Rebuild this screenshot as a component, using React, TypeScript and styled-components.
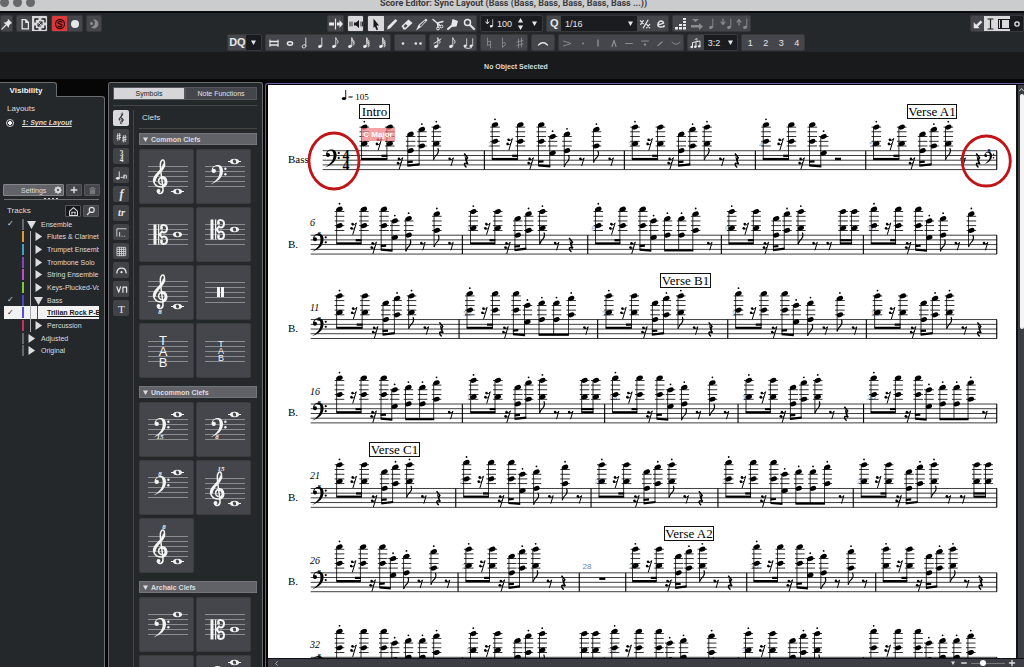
import React from "react";
import styled, { createGlobalStyle, css } from "styled-components";

const Global = createGlobalStyle`
  * { box-sizing: border-box; }
  html, body, #root { height: 100%; }
  body { margin: 0; overflow: hidden; background: #060607; font-family: "Liberation Sans", Arial, sans-serif; font-size: 8px; color: #dcdddf; }
  button, input, select { font: inherit; color: inherit; margin: 0; padding: 0; border: 0; background: none; border-radius: 0; }
  button { display: inline-flex; align-items: center; justify-content: center; flex: none; }
  h1, h2, h3, p, ul { margin: 0; padding: 0; font-size: inherit; font-weight: inherit; list-style: none; }
  svg { display: block; flex: none; }
`;

/* ---------- window chrome ---------- */

const Window = styled.div`
  display: flex;
  flex-direction: column;
  height: 100vh;
  overflow: hidden;
`;
const TitleBar = styled.header`
  display: flex;
  align-items: flex-start;
  height: 13px;
  flex: none;
  background: #cbccce;
  border-bottom: 2px solid #0b0b0d;
  overflow: hidden;
`;
const Lights = styled.div`
  display: flex;
  gap: 4px;
  flex: 1;
  i { width: 9px; height: 9px; margin-top: -2px; border-radius: 50%; background: #676869; }
`;
const Title = styled.h1`
  flex: none;
  margin-top: -3px;
  padding-left: 3px;
  color: #3a3b3d;
  font: bold 9px/12px Roboto, "Liberation Sans", sans-serif;
  white-space: nowrap;
`;
const TitleEnd = styled.div`flex: 1;`;
const Toolbars = styled.div`
  flex: none;
  height: 39px;
  padding-top: 2px;
  display: flex;
  flex-direction: column;
  gap: 2px;
  background: #25282b;
  overflow: hidden;
`;
const ToolRow = styled.div`
  display: flex;
  gap: 3px;
  height: 17px;
  white-space: nowrap;
`;
const Spacer = styled.div<{ $grow: number }>`flex: ${(p) => p.$grow} 1 0;`;
const Group = styled.div<{ $w?: number; $dim?: boolean }>`
  display: flex;
  flex: none;
  width: ${(p) => (p.$w ? `${p.$w}px` : "auto")};
  background: #45464b;
  border: 1px solid #37383c;
  border-radius: 2px;
  color: ${(p) => (p.$dim ? "#8a8b8f" : "#e6e7e9")};
  overflow: hidden;
  > button { flex: 1 1 16px; min-width: 0; }
`;
const Tool = styled.button<{ $tone?: "light" | "red" | "dark" }>`
  font-size: 9px;
  ${(p) => p.$tone === "light" && css`background: #d9d9dc; color: #18191b;`}
  ${(p) => p.$tone === "red" && css`background: #dc3a3a; color: #3a0a0c;`}
  ${(p) => p.$tone === "dark" && css`background: #1a1b1e;`}
`;
const Field = styled.div<{ $w: number }>`
  display: flex;
  align-items: center;
  justify-content: space-between;
  width: ${(p) => p.$w}px;
  padding: 0 4px;
  background: #1b1c1f;
  font-size: 9px;
`;
const Stepper = styled.span`
  display: flex;
  flex-direction: column;
  gap: 2px;
`;
const NumberInput = styled.input`width: 20px; font-size: 9px;`;
const Select = styled.select`
  flex: 1;
  min-width: 0;
  appearance: none;
  font-size: 9px;
`;
const Caption = styled.span<{ $w: number }>`
  width: ${(p) => p.$w}px;
  text-align: center;
  font-size: 11px;
  line-height: 15px;
  font-weight: bold;
`;
const InfoLine = styled.div`
  flex: none;
  height: 30px;
  display: flex;
  align-items: center;
  justify-content: center;
  padding: 1px 0 0 8px;
  background: #191a1c;
  border-bottom: 3px solid #060607;
  font-size: 7px;
  font-weight: bold;
`;
const Body = styled.div`
  flex: 1;
  min-height: 0;
  display: flex;
`;

/* ---------- visibility panel ---------- */

const Visibility = styled.aside`
  width: 105px;
  flex: none;
  display: flex;
  flex-direction: column;
`;
const TabStrip = styled.div`
  display: flex;
  height: 14px;
  flex: none;
`;
const PanelTab = styled.button`
  width: 57px;
  height: 15px;
  background: #25282b;
  border: solid #6a6c70;
  border-width: 1px 1px 0 0;
  border-radius: 0 3px 0 0;
  font-weight: bold;
  font-size: 8px;
  padding-right: 4px;
  color: #f2f2f3;
  z-index: 1;
`;
const VisBody = styled.div`
  flex: 1;
  min-height: 0;
  background: #25282b;
  border: solid #6a6c70;
  border-width: 1px 1px 0 0;
  border-radius: 0 3px 0 0;
  padding: 6px 5px 0 3px;
  display: flex;
  flex-direction: column;
`;
const SectionTitle = styled.h2`
  font-size: 8px;
  line-height: 12px;
  padding-left: 4px;
  flex: 1;
`;
const Layouts = styled.section`height: 81px; flex: none;`;
const LayoutChoice = styled.label`
  display: flex;
  align-items: center;
  gap: 8px;
  margin-top: 3px;
  padding-left: 3px;
  height: 10px;
  font: italic bold 7px/10px "Liberation Sans", sans-serif;
  text-decoration: underline;
  input {
    appearance: none;
    width: 8px;
    height: 8px;
    border: 1px solid #d0d1d3;
    border-radius: 50%;
    background: radial-gradient(circle, #fff 0 2px, transparent 2px);
  }
`;
const ButtonRow = styled.div`display: flex; gap: 2px; flex: none; align-items: center;`;
const FlatButton = styled.button<{ $w: number; $tone?: string }>`
  width: ${(p) => p.$w}px;
  height: 12px;
  background: ${(p) => p.$tone ?? "#45464b"};
  border: 1px solid #55565b;
  border-radius: 1px;
  font-size: 7px;
  gap: 8px;
`;
const SettingsButton = styled(FlatButton)`
  justify-content: space-between;
  padding: 0 2px 0 17px;
  background: #626368;
  border-color: #85868a;
`;
const Handle = styled.div`
  margin: 2px 0 5px 1px;
  height: 2px;
  flex: none;
  border-bottom: 1px solid #6b6d70;
  background: repeating-linear-gradient(90deg, #d0d1d3 0 2px, transparent 2px 4px) 40px 0 / 14px 2px no-repeat;
`;
const Tree = styled.ul`
  height: 139px;
  margin: 1px 0 0 1px;
  display: grid;
  grid-template-rows: repeat(11, 1fr);
  flex: none;
`;
const TreeRow = styled.li<{ $selected?: boolean }>`
  display: flex;
  align-items: center;
  overflow: hidden;
  font-size: 7px;
  white-space: nowrap;
  ${(p) => p.$selected && css`background: #f2f2f3; color: #17181a;`}
`;
const TrackName = styled.span<{ $selected?: boolean }>`
  ${(p) => p.$selected && css`font-weight: bold; text-decoration: underline;`}
`;
const Check = styled.span`width: 18px; flex: none; padding-left: 3px; font: bold 8px/8px "DejaVu Sans", sans-serif;`;
const Swatch = styled.span<{ $c: string }>`width: 2px; height: 11px; flex: none; background: ${(p) => p.$c};`;
const Guide = styled.span<{ $line: boolean }>`
  width: 7px;
  height: 100%;
  flex: none;
  border-right: 1px solid ${(p) => (p.$line ? "#a9abae" : "transparent")};
`;
const Toggle = styled.span<{ $level: number; $leaf?: boolean }>`
  width: 9px;
  height: 100%;
  flex: none;
  display: flex;
  align-items: center;
  justify-content: center;
  margin-left: ${(p) => (p.$level ? 3 : -4)}px;
  margin-right: ${(p) => (p.$level ? 4 : 5)}px;
  ${(p) => p.$leaf && css`background: linear-gradient(#4a4b4e, #4a4b4e) 3px 0 / 1px 100% no-repeat;`}
`;

/* ---------- symbols panel ---------- */

const Symbols = styled.aside`
  width: 155px;
  flex: none;
  margin: 0 2px 0 3px;
  padding: 4px 5px 0 4px;
  background: #25282b;
  border: 1px solid #6a6c70;
  border-bottom: 0;
  border-radius: 3px 3px 0 0;
  display: flex;
  flex-direction: column;
  overflow: hidden;
`;
const Tabs = styled.div`
  display: flex;
  flex: none;
  padding-bottom: 5px;
  border-bottom: 1px solid #44464a;
`;
const SymbolTab = styled.button<{ $on?: boolean }>`
  flex: 1;
  height: 13px;
  font-size: 7px;
  border: 1px solid #55565b;
  background: ${(p) => (p.$on ? "#d6d6d9" : "#45464b")};
  color: ${(p) => (p.$on ? "#1b1c1e" : "#e0e1e3")};
`;
const SymbolBody = styled.div`display: flex; flex: 1; min-height: 0; padding-top: 4px;`;
const Rail = styled.nav`
  display: flex;
  flex-direction: column;
  gap: 3px;
  width: 21px;
  flex: none;
  border-right: 1px solid #44464a;
`;
const RailButton = styled.button<{ $on?: boolean }>`
  width: 16px;
  height: 16px;
  border-radius: 2px;
  background: ${(p) => (p.$on ? "#d9d9dc" : "#424347")};
  color: ${(p) => (p.$on ? "#18191b" : "#e6e7e9")};
`;
const Palette = styled.div`flex: 1; min-width: 0; padding-left: 5px;`;
const PaletteTitle = styled.h2`
  height: 19px;
  padding-left: 3px;
  line-height: 15px;
  border-bottom: 1px solid #44464a;
  margin-bottom: 4px;
`;
const PaletteHead = styled.button`
  width: 100%;
  height: 12px;
  justify-content: flex-start;
  gap: 3px;
  padding-left: 3px;
  background: #616267;
  border: 1px solid #74757a;
  font-size: 7px;
  font-weight: bold;
`;
const Cells = styled.div`
  display: grid;
  grid-template-columns: 55px 55px;
  gap: 3px 2px;
  padding: 4px 0 8px;
`;
const Cell = styled.button`
  height: 55px;
  background: #45464b;
  border: 1px solid #3b3c40;
  border-radius: 2px;
  color: #f4f4f5;
  align-items: flex-start;
`;

/* ---------- score area ---------- */

const ScorePane = styled.main`
  flex: 1;
  min-width: 0;
  display: flex;
  flex-direction: column;
  border: solid #6c5fa6;
  border-width: 1px 0 0 1px;
  border-radius: 3px 0 0 0;
  margin-top: 1px;
  padding: 1px 0 0 2px;
`;
const ScoreRow = styled.div`flex: 1; min-height: 0; display: flex;`;
const Page = styled.div`
  flex: 1;
  min-width: 0;
  background: #fff;
  overflow: hidden;
`;
const VScroll = styled.div`
  width: 8px;
  flex: none;
  display: flex;
  flex-direction: column;
  align-items: center;
  background: #3d3e43;
  border-left: 2px solid #111214;
`;
const VThumb = styled.div`
  width: 4px;
  height: 41%;
  margin-left: 2px;
  border-radius: 2px;
  background: #f4f4f5;
`;
const HScroll = styled.footer`
  height: 9px;
  flex: none;
  display: flex;
  align-items: center;
  gap: 3px;
  padding: 0 8px 0 4px;
  background: #3d3e43;
  border-top: 1px solid #0f1011;
  button { width: 8px; height: 8px; }
`;
const Zoom = styled.input`
  appearance: none;
  width: 34px;
  height: 7px;
  background: linear-gradient(#77787c, #77787c) 0 3px / 100% 1px no-repeat;
  &::-webkit-slider-thumb { appearance: none; width: 6px; height: 6px; border-radius: 50%; background: #fff; }
`;

/* ---------- icons ---------- */

const Icon = ({ children, s = 14 }: { children: React.ReactNode; s?: number }) => (
  <svg width={s} height={s} viewBox="0 0 14 14" fill="currentColor" stroke="none" aria-hidden="true">{children}</svg>
);
const L = ({ d, w = 1 }: { d: string; w?: number }) => (
  <path d={d} fill="none" stroke="currentColor" strokeWidth={w} strokeLinecap="round" strokeLinejoin="round" />
);
const Tri = ({ dir = "down", s = 6 }: { dir?: "down" | "right" | "up"; s?: number }) => (
  <svg width={s} height={s} viewBox="0 0 6 6" fill="currentColor" aria-hidden="true">
    <path d={dir === "down" ? "M0 .6H6L3 6Z" : dir === "up" ? "M0 5.4H6L3 0Z" : "M1 0L5.400 3L1 6Z"} />
  </svg>
);
const Note = ({ x = 6, open = false, flags = 0 }: { x?: number; open?: boolean; flags?: number }) => (
  <>
    <ellipse cx={x} cy="10.400" rx="2" ry="1.500" transform={`rotate(-20 ${x} 10.400)`} fill={open ? "none" : "currentColor"} stroke="currentColor" strokeWidth={open ? 0.8 : 0} />
    <L d={`M${x + 1.8} 10V2`} w={0.9} />
    {Array.from({ length: flags }, (_, i) => (
      <L key={i} d={`M${x + 1.8} ${2 + i * 1.9}q.4 1.800 2 2.600q.8 1.300-.2 2.600`} w={0.9} />
    ))}
  </>
);

const Treble = ({ x, y, k }: { x: number; y: number; k: number }) => (
  <g transform={`translate(${x} ${y}) scale(${k})`} fill="none" stroke="currentColor" strokeLinecap="round">
    <path strokeWidth="3" d="M0 6C-7 3-6-8 2-8C13-8 15 9 2 11C-11 12-18 1-13-9C-8-18 7-24 7-36C7-45 1-45-1-37C-3-29 2-8 4 15C5 25-5 27-7 20" />
    <path strokeWidth="5.600" d="M-13-2C-12-14 4-22 6-33M2-8C11-8 13 5 5 9" />
    <circle cx="-5" cy="19" r="3.800" fill="currentColor" stroke="none" />
  </g>
);
const BassClef = ({ x, y, k }: { x: number; y: number; k: number }) => (
  <g transform={`translate(${x} ${y}) scale(${k})`} fill="currentColor">
    <path d="M-10-1C-10-8-5-12 1-12C8-12 12-7 11 1C10 12 1 19-12 24C-2 17 5 11 5 0C5-7 3-10-1-10C-4-10-7-8-7.500-4Z" />
    <circle cx="-6" cy="-1" r="4" />
    <circle cx="15.500" cy="-5" r="2.200" />
    <circle cx="15.500" cy="5" r="2.200" />
  </g>
);
const CClef = ({ x, y, k }: { x: number; y: number; k: number }) => (
  <g transform={`translate(${x} ${y}) scale(${k})`} fill="currentColor">
    <path d="M-15-20h6v40h-6zM-6-20h2.500v40h-2.500z" />
    <circle cx="1" cy="-13" r="3" />
    <circle cx="1" cy="13" r="3" />
    <path fill="none" stroke="currentColor" strokeWidth="4" d="M0-15C1-20 12-21 12-12C12-3 5-3 2-6L-3 0L2 6C5 3 12 3 12 12C12 21 1 20 0 15" />
  </g>
);

type ClefKind = "treble" | "bass" | "c" | "perc" | "tab" | "tabSmall";
interface ClefCell { kind: ClefKind; line?: number; note?: number; top?: string; bottom?: string; staff?: number }

const ClefDrawing = ({ kind, line = 0, note, top, bottom, staff = 17 }: ClefCell) => {
  const y = staff - 1 + line * 5;
  const small = { fontFamily: "Liberation Serif, serif", fontStyle: "italic", fontWeight: "bold", fontSize: 7, fill: "currentColor", textAnchor: "middle" as const };
  return (
    <svg width="53" height="53" viewBox="0 0 53 53" aria-hidden="true">
      {[0, 1, 2, 3, 4].map((i) => (
        <rect key={i} x="8" y={staff - 1 + i * 5} width="40" height="1" fill="#8b8c90" />
      ))}
      {kind === "treble" && <Treble x={21} y={y + 0.5} k={0.5} />}
      {kind === "bass" && <BassClef x={20} y={y + 0.5} k={0.54} />}
      {kind === "c" && <CClef x={21} y={y + 0.5} k={0.5} />}
      {kind === "perc" && <path d={`M20 ${y}h3v10h-3zM24 ${y}h3v10h-3z`} fill="currentColor" />}
      {(kind === "tab" || kind === "tabSmall") &&
        ["T", "A", "B"].map((t, i) => {
          const fs = kind === "tab" ? 13 : 9;
          const step = kind === "tab" ? 11 : 7;
          return (
            <text key={t} x={kind === "tab" ? 23 : 24} y={y + 10 + fs * 0.36 + (i - 1) * step} fontSize={fs} textAnchor="middle" fill="currentColor" fontFamily="Liberation Sans, sans-serif">{t}</text>
          );
        })}
      {top && <text {...small} x={kind === "treble" ? 24 : 20} y={kind === "treble" ? y - 22 : y - 6}>{top}</text>}
      {bottom && <text {...small} x={20} y={kind === "treble" ? y + 18 : y + 15}>{bottom}</text>}
      {note !== undefined && (
        <g>
          {(note < 0 || note > 4) && <rect x="31" y={staff - 1 + note * 5} width="13" height="1" fill="currentColor" />}
          <ellipse cx="37.500" cy={staff - 0.5 + note * 5} rx="4.500" ry="2.700" fill="currentColor" />
          <ellipse cx="37.500" cy={staff - 0.5 + note * 5} rx="1.600" ry="2" fill="#45464b" transform={`rotate(-30 37.500 ${staff - 0.5 + note * 5})`} />
        </g>
      )}
    </svg>
  );
};

const palettes: { name: string; cells: ClefCell[] }[] = [
  {
    name: "Common Clefs",
    cells: [
      { kind: "treble", line: 3, note: 5 },
      { kind: "bass", line: 1, note: -1 },
      { kind: "c", line: 2, note: 2 },
      { kind: "c", line: 1, note: 1 },
      { kind: "treble", line: 3, note: 5, bottom: "8", staff: 16 },
      { kind: "perc", line: 1 },
      { kind: "tab", staff: 18 },
      { kind: "tabSmall", staff: 18 },
    ],
  },
  {
    name: "Uncommon Clefs",
    cells: [
      { kind: "bass", line: 1, note: -1, bottom: "15" },
      { kind: "bass", line: 1, note: -1, bottom: "8" },
      { kind: "bass", line: 1, note: -1, top: "8" },
      { kind: "treble", line: 3, note: 5, top: "15", staff: 18 },
      { kind: "treble", line: 3, note: 5, top: "8", staff: 18 },
    ],
  },
  {
    name: "Archaic Clefs",
    cells: [
      { kind: "bass", line: 2, note: 0 },
      { kind: "c", line: 3, note: 3 },
      { kind: "treble", line: 4, note: 4 },
      { kind: "bass", line: 0, note: -2 },
    ],
  },
];

/* ---------- engraved music ---------- */

const SP = 4.72;
type Pitch = "D" | "E" | "C" | "A" | "G";
const upper: Record<Pitch, number> = { E: -5.5, D: -5, C: -4.5, A: -3.5, G: -3 };

const Chord = ({ x, y, p, to, dot }: { x: number; y: number; p: Pitch; to: number; dot?: boolean }) => {
  const hi = upper[p];
  const ledgers: number[] = [];
  for (let i = -1; i >= Math.ceil(hi); i--) ledgers.push(i);
  const yy = y + hi * SP;
  return (
    <g>
      {ledgers.map((i) => <rect key={i} x={x - 4.8} y={y + i * SP - 0.4} width="9.600" height="0.800" />)}
      {[hi, hi + 3.5].map((h) => (
        <ellipse key={h} cx={x} cy={y + h * SP} rx="3.300" ry="2.300" transform={`rotate(-22 ${x} ${y + h * SP})`} />
      ))}
      <rect x={x - 3.2} y={yy} width="0.800" height={y + to - yy} />
      {dot && <circle cx={x} cy={yy - 5.4} r="0.900" />}
    </g>
  );
};
const Beam = ({ x1, y1, x2, y2 }: { x1: number; y1: number; x2: number; y2: number }) => (
  <path d={`M${x1 - 3.2} ${y1 - 1.1}L${x2 - 2.3} ${y2 - 1.1}V${y2 + 1.1}L${x1 - 3.2} ${y1 + 1.1}Z`} />
);
const Flag = ({ x, y }: { x: number; y: number }) => (
  <path d={`M${x - 2.9} ${y}Q${x - 1.6} ${y - 4} ${x + 1} ${y - 6}Q${x + 3} ${y - 9} ${x + 1.5} ${y - 12}`} fill="none" stroke="#000" strokeWidth="1.100" />
);
const Rest8 = ({ x, y }: { x: number; y: number }) => (
  <g transform={`translate(${x} ${y + 10.6})`}>
    <circle cx="-1.400" cy="-2.600" r="1.300" />
    <path d="M-1.600-1.600Q1-1.200 2.400-3.400L0 4.600" fill="none" stroke="#000" strokeWidth="1" />
  </g>
);
const Rest16 = ({ x, y }: { x: number; y: number }) => (
  <g transform={`translate(${x} ${y})`}>
    <circle cx="-0.800" cy="-4.200" r="1.300" />
    <circle cx="-1.800" cy="0" r="1.300" />
    <path d="M-1-3.400Q1.500-3 3-5.400L-0.600 6.400M-2 .8Q.5 1.200 1.600-.8" fill="none" stroke="#000" strokeWidth="1" />
  </g>
);
const Rest4 = ({ x, y }: { x: number; y: number }) => (
  <g transform={`translate(${x} ${y + 9.8})`}>
    <path d="M-1.500-7L1.800-2.800Q-.6-.2 2.300 3.400" fill="none" stroke="#000" strokeWidth="1.500" />
    <path d="M-1.200-4.500L1.400-1.500L0 1Z" />
    <path d="M2.200 3.300Q-1.800 1.600-1.200 4.200Q-.8 5.800.8 7" fill="none" stroke="#000" strokeWidth="1.400" />
  </g>
);

type Kind = "D" | "D2" | "E" | "E3" | "EH" | "W";
type Bar = [start: number, end: number, kind: Kind];
interface System { n: number; bars: Bar[]; k: number }

const SLOT = [0, 14.4, 25.4, 35.4, 46.3, 57.6, 72, 86.7, 101.4, 116, 127.8];

const BarDrawing = ({ bar, y, k, n }: { bar: Bar; y: number; k: number; n: number }) => {
  const [x0, end, kind] = bar;
  const at = (i: number) => x0 + SLOT[i] * k;
  const barline = <rect x={end - 0.5} y={y} width="1.100" height={4 * SP} />;
  const num = (
    <text x={kind === "W" ? x0 : x0 - 7} y={y - 4} fontSize="8" fill="#6d86a8" fontFamily="Liberation Sans, sans-serif" opacity={kind === "W" ? 1 : 0.7}>{n}</text>
  );
  if (kind === "W") return <g>{barline}{num}<rect x={(x0 + end) / 2 - 4.8} y={y + SP} width="6" height="2.400" /></g>;
  const isD = kind[0] === "D";
  const p1: Pitch = isD ? "D" : "E";
  const a: Pitch = isD ? "A" : "E";
  const b: Pitch = isD ? "C" : "G";
  const ya = isD ? 15 : 14.6;
  const yb = isD ? 13.6 : 15.6;
  return (
    <g>
      {n % 5 !== 1 && n !== 32 ? num : null}
      <Chord x={at(0)} y={y} p={p1} to={8.3} dot />
      <Rest16 x={at(1)} y={y - 6.8} />
      <Chord x={at(2)} y={y} p={p1} to={8.3} />
      <Beam x1={at(0)} y1={y + 8.3} x2={at(2)} y2={y + 8.3} />
      <Beam x1={at(2) - 5} y1={y + 5.1} x2={at(2)} y2={y + 5.1} />
      <Rest16 x={at(3)} y={y + 12.4} />
      <Chord x={at(4)} y={y} p={a} to={ya} />
      <Chord x={at(5)} y={y} p={b} to={yb} dot />
      <Beam x1={at(4)} y1={y + ya} x2={at(5)} y2={y + yb} />
      <Beam x1={at(4)} y1={y + ya - 3.6} x2={at(4) + 4.5} y2={y + ya - 4} />
      {isD && (
        <>
          <Chord x={at(6)} y={y} p="D" to={9} dot />
          <Flag x={at(6)} y={y + 9.4} />
          <Rest8 x={at(7)} y={y} />
          {kind === "D" ? <Rest4 x={at(8)} y={y} /> : (
            <>
              <Rest8 x={at(8)} y={y} />
              <Chord x={at(9)} y={y} p="D" to={8.3} />
              <Chord x={at(10)} y={y} p="D" to={8.3} />
              <Beam x1={at(9)} y1={y + 8.3} x2={at(10)} y2={y + 8.3} />
              <Beam x1={at(9)} y1={y + 5.1} x2={at(10)} y2={y + 5.1} />
            </>
          )}
        </>
      )}
      {kind === "E" && (
        <>
          <Chord x={at(6)} y={y} p="A" to={16} dot />
          <Flag x={at(6)} y={y + 16.4} />
          <Rest8 x={at(7)} y={y} />
          <Chord x={at(8)} y={y} p="C" to={11.6} dot />
          <Flag x={at(8)} y={y + 12} />
          <Rest8 x={at(9)} y={y} />
        </>
      )}
      {kind === "E3" && (
        <>
          <Chord x={at(6)} y={y} p="A" to={15.2} dot />
          <Chord x={at(7)} y={y} p="A" to={15.2} dot />
          <Chord x={at(8)} y={y} p="C" to={15.2} dot />
          <Beam x1={at(6)} y1={y + 15.2} x2={at(8)} y2={y + 15.2} />
          <Rest8 x={at(9)} y={y} />
        </>
      )}
      {kind === "EH" && <rect x={at(6) - 3} y={y + 2 * SP - 2.4} width="6" height="2.400" />}
      {barline}
    </g>
  );
};

const systems: System[] = [
  { n: 1, k: 1, bars: [[364.3, 484.3, "D"], [495, 624.3, "E"], [635, 755.3, "D"], [766, 865.7, "EH"], [876.3, 996.7, "D"]] },
  { n: 6, k: 0.96, bars: [[339.5, 462.3, "E"], [473.3, 587.7, "D"], [598.3, 721.3, "E3"], [731.7, 863.3, "D2"], [874, 996.7, "E"]] },
  { n: 11, k: 1, bars: [[339.5, 459, "D"], [469.8, 597.6, "E3"], [608.8, 727.7, "D"], [738.5, 866.3, "E"], [877.5, 996.7, "D"]] },
  { n: 16, k: 0.957, bars: [[339.5, 462.3, "E3"], [473.5, 604.6, "D2"], [615.4, 738, "E"], [748.8, 863.5, "D"], [873.8, 996.7, "E3"]] },
  { n: 21, k: 0.972, bars: [[339.5, 455.7, "D"], [466.5, 591, "E"], [601.8, 717.9, "D"], [728.7, 853.2, "E3"], [864, 996.7, "D2"]] },
  { n: 26, k: 0.93, bars: [[339.5, 458, "E"], [468.7, 579.2, "D"], [582.5, 625.7, "W"], [635.4, 746.7, "D"], [756.7, 875.7, "E"], [886, 996.7, "D"]] },
  { n: 32, k: 0.957, bars: [[339.5, 462.3, "E3"], [473.3, 604.3, "D2"], [614.6, 738.3, "E"], [748.3, 863.3, "D"], [873.7, 996.7, "E3"]] },
];
const marks = [
  { t: "Intro", x: 359, y: 104, w: 31 },
  { t: "Verse A1", x: 907, y: 104, w: 50 },
  { t: "Verse B1", x: 660, y: 273, w: 51 },
  { t: "Verse C1", x: 369, y: 442, w: 51 },
  { t: "Verse A2", x: 664, y: 526, w: 50 },
];
const serif = "Liberation Serif, Times New Roman, serif";

const Score = () => (
  <svg width="748" height="574" viewBox="268 85 748 574" fill="#000" color="#000" role="img" aria-label="Bass score">
    {systems.map((s, i) => {
      const y = 150.7 + i * 84.42;
      const left = i === 0 ? 322.7 : 310.7;
      return (
        <g key={s.n}>
          {[0, 1, 2, 3, 4].map((l) => <rect key={l} x={left} y={y + l * SP - 0.4} width={997 - left} height="0.900" fill="#2a2a2a" />)}
          <text x="288" y={y + 12.5} fontFamily={serif} fontSize="11">{i === 0 ? "Bass" : "B."}</text>
          {i > 0 && <text x="310" y={y - 9} fontFamily={serif} fontSize="10" fontStyle="italic">{s.n}</text>}
          {i > 0 && <text x="319" y={y + 1} fontFamily={serif} fontSize="7" fontWeight="bold" fontStyle="italic" textAnchor="middle">8</text>}
          <BassClef x={i === 0 ? 331 : 318} y={y + SP} k={0.5} />
          {s.bars.map((b, j) => <BarDrawing key={j} bar={b} y={y} k={s.k} n={s.n + j} />)}
        </g>
      );
    })}
    <g fontFamily={serif} fontWeight="bold" fontSize="14" textAnchor="middle">
      <text x="346" y="160">4</text>
      <text x="346" y="170">4</text>
    </g>
    <BassClef x={988} y={156} k={0.36} />
    <text x="989" y="153" fontFamily={serif} fontSize="6" fontWeight="bold" textAnchor="middle">8</text>
    <ellipse cx="344" cy="98.500" rx="2.200" ry="1.600" />
    <rect x="345.300" y="90" width="0.900" height="8.500" />
    <text x="348" y="100" fontFamily={serif} fontSize="9">= 105</text>
    {marks.map((m) => (
      <g key={m.t}>
        <rect x={m.x + 0.5} y={m.y + 0.5} width={m.w - 1} height="14" fill="#fff" stroke="#111" />
        <text x={m.x + m.w / 2} y={m.y + 12} fontFamily={serif} fontSize="13" textAnchor="middle">{m.t}</text>
      </g>
    ))}
    <rect x="361" y="128" width="34" height="13" fill="#ee7a80" opacity="0.700" />
    <text x="378" y="137" fontFamily="Liberation Sans, sans-serif" fontSize="8" fontWeight="bold" fill="#fff" textAnchor="middle">C Major</text>
    <g fill="none" stroke="#c01418" strokeWidth="2.800">
      <ellipse cx="334" cy="161" rx="25" ry="28" />
      <ellipse cx="986.300" cy="161" rx="24" ry="25" />
    </g>
  </svg>
);

/* ---------- data for lists ---------- */

const tracks: { name: string; c: string; level: number; check?: boolean; open?: boolean; leaf?: boolean; selected?: boolean }[] = [
  { name: "Ensemble", c: "#65686c", level: 0, check: true, open: true },
  { name: "Flutes & Clarinets", c: "#d8a02c", level: 1 },
  { name: "Trumpet Ensemble", c: "#3fa3c9", level: 1 },
  { name: "Trombone Solo", c: "#8446bb", level: 1 },
  { name: "String Ensemble", c: "#c14cc4", level: 1 },
  { name: "Keys-Plucked-Voc", c: "#7fcb35", level: 1 },
  { name: "Bass", c: "#4747c4", level: 1, check: true, open: true },
  { name: "Trilian Rock P-Bass", c: "#5b4be0", level: 1, check: true, leaf: true, selected: true },
  { name: "Percussion", c: "#c5325c", level: 1 },
  { name: "Adjusted", c: "#65686c", level: 0 },
  { name: "Original", c: "#65686c", level: 0 },
];

const railIcons: { label: string; icon: React.ReactNode }[] = [
  { label: "Clefs", icon: <Treble x={7} y={8.4} k={0.18} /> },
  { label: "Key signatures", icon: <><L d="M3 3v7M5 2.500v7M2 5.500l4-1M2 8l4-1" w={0.9} /><L d="M9 5v7M11 4.500v7M8 7.500l4-1M8 10l4-1" w={0.9} /></> },
  { label: "Time signatures", icon: <text x="7" y="6.500" fontSize="8" fontWeight="bold" textAnchor="middle" fontFamily={serif}>3<tspan x="7" dy="6.500">4</tspan></text> },
  { label: "Tempo", icon: <><ellipse cx="3" cy="10" rx="2" ry="1.500" /><L d="M4.600 10V3M6.500 9h1.500" /><L d="M9 10V7q1.500-1.500 1.500 0V10M10.500 7q2-1.500 2 0V10" w={0.9} /></> },
  { label: "Dynamics", icon: <text x="7" y="11" fontSize="13" fontWeight="bold" fontStyle="italic" textAnchor="middle" fontFamily={serif}>f</text> },
  { label: "Ornaments", icon: <text x="7" y="10" fontSize="11" fontWeight="bold" fontStyle="italic" textAnchor="middle" fontFamily={serif}>tr</text> },
  { label: "Lines", icon: <><L d="M2 11V3H12" w={0.9} /><L d="M5 7v4M7.500 11h.1M10 11h.1" /></> },
  { label: "Chord diagrams", icon: <L d="M2.500 2.500h9v9h-9zM2.500 4.700h9M2.500 7h9M2.500 9.300h9M4.800 2.500v9M7 2.500v9M9.300 2.500v9" w={0.8} /> },
  { label: "Fermatas", icon: <><L d="M2 9.500Q2.500 4.500 7 4.500T12 9.500" w={1.4} /><circle cx="7" cy="8.800" r="1.200" /></> },
  { label: "Bowing", icon: <><L d="M2 4l2 6l2-6" w={1.2} /><L d="M8.500 10V4.500h4V10" w={1.3} /></> },
  { label: "Text", icon: <text x="7" y="11.500" fontSize="12" textAnchor="middle" fontFamily={serif}>T</text> },
];

const Btn = ({ label, tone, children, s }: { label: string; tone?: "light" | "red" | "dark"; children: React.ReactNode; s?: number }) => (
  <Tool type="button" $tone={tone} aria-label={label}><Icon s={s}>{children}</Icon></Tool>
);

export default function App() {
  return (
    <Window>
      <Global />
      <TitleBar>
        <Lights><i /><i /><i /></Lights>
        <Title>Score Editor: Sync Layout (Bass (Bass, Bass, Bass, Bass, Bass ...))</Title>
        <TitleEnd />
      </TitleBar>

      <Toolbars>
        <ToolRow>
          <Group $w={13}><Btn label="Pin" s={12}><L d="M1 13L5.500 8.500" w={1.4} /><path d="M8 1l5 5-1.500.5-2 2-.3 3L3 5.300l3-.3 2-2z" /></Btn></Group>
          <Group $w={32}>
            <Btn label="New page"><path fillRule="evenodd" d="M3.500 2h4.500l3 3v7.500h-7.500zM4.800 3.200v8h5V6h-2.600V3.200z" /></Btn>
            <Btn label="Edit in place" tone="light"><L d="M2 5V2h3M9 2h3v3M12 9v3H9M5 12H2V9" w={1.4} /><L d="M5 9l4-4M6.500 5H9v2.500M5 6.500V9h2.500" w={1} /></Btn>
          </Group>
          <Group $w={32}>
            <Btn label="Solo" tone="red"><circle cx="7" cy="7" r="4.500" fill="none" stroke="currentColor" strokeWidth="1.300" /><L d="M9 5.200Q7 3.600 5.500 5T7 7T8.500 9T5 8.900" w={1.3} /></Btn>
            <Btn label="Record"><circle cx="7" cy="7" r="4" /></Btn>
          </Group>
          <Group $w={16} $dim><Btn label="Feedback"><path d="M6 2.500a4.500 4.500 0 1 1-2 7.800a4.300 4.300 0 0 0 2-7.800z" /><circle cx="4.500" cy="6.500" r="1.500" /></Btn></Group>
          <Spacer $grow={223} />
          <Group $w={17}><Btn label="Auto-scroll"><path d="M0 5.500h5v3H0zM8 5.500h2.500V3L14 7l-3.500 4V8.500H8z" /><L d="M6.500 2v10" w={1.2} /></Btn></Group>
          <Group $w={17}><Btn label="Acoustic feedback" tone="light"><path d="M5 5.500h2L10 3v8L7 8.500H5z" /><L d="M1 5v4M3 5v4M12 5v4M13.500 5v4" w={0.9} /></Btn></Group>
          <Group $w={110}>
            <Btn label="Select" tone="light"><path d="M4.500 1.500l5.500 7H7.500l1.500 4-1.500.7L6 9.500l-1.500 1.400z" /></Btn>
            <Btn label="Draw"><path d="M2 12.500l1-3.200L10.500 2l1.800 1.800L5 11.500z" /></Btn>
            <Btn label="Erase"><path fillRule="evenodd" d="M1.500 9L8.500 2.500l4 3.500-7 6.500h-2zM3.500 9l1.500 2 2.500-2.200-1.700-1.900z" /></Btn>
            <Btn label="Split"><path fillRule="evenodd" d="M1 13.500L3.500 8 11 1.500l1.500 1.700L6 10zM4.700 8.600l1 .8L10.600 4l-.6-.6z" /></Btn>
            <Btn label="Cut"><L d="M2 2.500l7 6M6.500 6L12 4.500M6.500 6.500l.5 4" w={1.4} /><circle cx="7" cy="11.500" r="1.400" fill="none" stroke="currentColor" /><circle cx="10.500" cy="9.500" r="1.400" fill="none" stroke="currentColor" /></Btn>
            <Btn label="Glue"><path d="M6.500 2l5.500 2-1.500 5.500-4 .5-1.300-2z" /><L d="M5.500 9l-3.500 3" w={2} /></Btn>
            <Btn label="Zoom"><circle cx="5.500" cy="5.500" r="3" fill="none" stroke="currentColor" strokeWidth="1.500" /><L d="M8 8l4 4" w={2} /></Btn>
          </Group>
          <Group $w={63}>
            <Field $w={46}>
              <Icon s={11}><L d="M3 2v5M1 5l2 2.500L5 5" w={1.2} /><Note x={8} /></Icon>
              <NumberInput aria-label="Velocity" defaultValue="100" />
              <Stepper><Tri dir="up" s={5} /><Tri s={5} /></Stepper>
            </Field>
            <Tool type="button" $tone="dark" aria-label="Velocity presets"><Tri s={5} /></Tool>
          </Group>
          <Group $w={123}>
            <Caption $w={14}>Q</Caption>
            <Field $w={78}>
              <Select aria-label="Quantize"><option>1/16</option></Select>
              <Tri s={5} />
            </Field>
            <Btn label="Iterative quantize" s={12}><L d="M1.500 3l3.500 3.500M5 3L2 7.500M10.500 2.500L5 11.500M9 7.500l3.500 4M12.500 7.500L9 11.500" w={1.3} /></Btn>
            <Btn label="Quantize panel" s={12}><L d="M4 8L10 6Q9.500 3.500 7 3.500T3.500 7T7 10.500T10.500 9" w={1.7} /></Btn>
          </Group>
          <Group $w={79} $dim>
            <Btn label="Step input"><path fill="#e6e7e9" d="M1 10h3v2.500H1zM5 10h3v2.500H5zM9 10h3v2.500H9zM5 7h3v2H5zM9 7h3v2H9zM9 4h3v2H9zM9 1h3v2H9z" /></Btn>
            <Btn label="Move insert"><path d="M1 8h8V6l4 3.500L9 13v-2.500H1z" /><path d="M2 2h7L5.500 5z" /></Btn>
            <Btn label="Record pitch"><Note x={6} /></Btn>
            <Btn label="Record NoteOn"><L d="M3 2v5M1 5l2 2.500L5 5" w={1.2} /><Note x={9} /></Btn>
            <Btn label="Record NoteOff"><L d="M3 8V3M1 5l2-2.500L5 5" w={1.2} /><Note x={9} /></Btn>
          </Group>
          <Spacer $grow={216} />
          <Group $w={54}>
            <Btn label="Open lower zone" s={12}><path d="M2 5v7h7L7 10l5-5-2-2-5 5z" /></Btn>
            <Btn label="Left zone" tone="light"><L d="M4 2h5M4 12h5M6.500 2v10" w={1.2} /></Btn>
            <Btn label="Set up layout" tone="light"><path fillRule="evenodd" d="M1 2h12v10H1zM2 3v8h1V3zM5 3v8h7V3z" /></Btn>
            <Btn label="Set up toolbar" tone="dark" s={6}><circle cx="7" cy="7" r="5" fill="none" stroke="currentColor" strokeWidth="3" /></Btn>
          </Group>
        </ToolRow>

        <ToolRow>
          <Spacer $grow={226} />
          <Group $w={35}>
            <Caption $w={19}>DQ</Caption>
            <Tool type="button" $tone="dark" aria-label="Display quantize"><Tri s={5} /></Tool>
          </Group>
          <Group $w={126}>
            <Btn label="Double whole"><L d="M3 4v6.500M11 4v6.500" w={1} /><L d="M3 5.500h8M3 9h8" w={1.5} /></Btn>
            <Btn label="Whole"><ellipse cx="7" cy="7.500" rx="2.600" ry="1.700" fill="none" stroke="currentColor" strokeWidth="1.400" /></Btn>
            <Btn label="Half"><Note open /></Btn>
            <Btn label="Quarter"><Note /></Btn>
            <Btn label="Eighth"><Note x={5} flags={1} /></Btn>
            <Btn label="16th"><Note x={5} flags={2} /></Btn>
            <Btn label="32nd"><Note x={5} flags={3} /></Btn>
            <Btn label="64th"><Note x={5} flags={3} /></Btn>
          </Group>
          <Group $w={32}>
            <Btn label="Dotted"><circle cx="7" cy="7.500" r="1.300" /></Btn>
            <Btn label="Double dotted"><circle cx="4.800" cy="7.500" r="1.300" /><circle cx="9.500" cy="7.500" r="1.300" /></Btn>
          </Group>
          <Group $w={48}>
            <Btn label="Grace note"><Note x={5} flags={1} /><L d="M3 7.500L10 3" w={0.9} /></Btn>
            <Btn label="Appoggiatura"><Note x={5} flags={1} /></Btn>
            <Btn label="Tie" s={12}><Note x={2.5} /><Note x={9.5} /><L d="M2 12.500q4.500 2 8 0" w={1.1} /></Btn>
          </Group>
          <Group $w={48} $dim>
            <Btn label="Natural"><L d="M5.500 2v7.500L8.500 8.500M8.500 12V5L5.500 6" w={0.9} /></Btn>
            <Btn label="Flat"><L d="M5.500 2v9.500Q9 9 8.500 7.200T5.500 7.500" w={0.9} /></Btn>
            <Btn label="Sharp"><L d="M5.500 3v9M8.500 2v9M4 6l6-1.500M4 9.500l6-1.500" w={0.9} /></Btn>
          </Group>
          <Group $w={24}><Btn label="Slur"><L d="M2.500 9Q7 4.500 11.500 9" w={1.3} /></Btn></Group>
          <Group $w={126} $dim>
            <Btn label="Accent"><L d="M3.500 5L11 7.500L3.500 10" /></Btn>
            <Btn label="Staccato"><circle cx="7" cy="7.500" r="1" /></Btn>
            <Btn label="Staccatissimo"><L d="M7 4v6" w={1.5} /></Btn>
            <Btn label="Marcato"><L d="M5 10.500L7 4.500L9 10.500" w={1.3} /></Btn>
            <Btn label="Tenuto"><L d="M3.500 7.500h7" /></Btn>
            <Btn label="Tenuto staccato"><L d="M3.500 5h7" /><circle cx="7" cy="8.500" r="1.200" /></Btn>
            <Btn label="Stress"><L d="M5 9.500L9 6" w={1.3} /></Btn>
            <Btn label="Unstress"><L d="M3 6Q7 11 11 6" /></Btn>
          </Group>
          <Group $w={51}>
            <Btn label="Tuplet"><L d="M3.500 11V6.500L11 5V10M7 10.500V6" w={1} /><circle cx="2.700" cy="11" r="1.300" /><circle cx="6.300" cy="10.700" r="1.300" /><circle cx="10.300" cy="10.300" r="1.300" /><L d="M6 3.500l2-1v2" w={0.8} /></Btn>
            <Field $w={35}>
              <Select aria-label="Tuplet ratio"><option>3:2</option></Select>
              <Tri s={5} />
            </Field>
          </Group>
          <Group $w={64}>
            {["1", "2", "3", "4"].map((v) => <Tool key={v} type="button">{v}</Tool>)}
          </Group>
          <Spacer $grow={217} />
        </ToolRow>
      </Toolbars>

      <InfoLine>No Object Selected</InfoLine>

      <Body>
        <Visibility>
          <TabStrip><PanelTab type="button">Visibility</PanelTab></TabStrip>
          <VisBody>
            <Layouts>
              <SectionTitle>Layouts</SectionTitle>
              <LayoutChoice><input type="radio" name="layout" defaultChecked />1: Sync Layout</LayoutChoice>
            </Layouts>
            <ButtonRow>
              <SettingsButton type="button" $w={61}>
                Settings
                <Icon s={8}><circle cx="7" cy="7" r="3.800" fill="none" stroke="currentColor" strokeWidth="3" /><L d="M7 1v2M7 11v2M1 7h2M11 7h2M3 3l1 1M10 10l1 1M11 3l-1 1M3 11l1-1" w={2} /></Icon>
              </SettingsButton>
              <FlatButton type="button" $w={16} aria-label="Add layout"><Icon s={10}><L d="M7 3v8M3 7h8" w={2} /></Icon></FlatButton>
              <FlatButton type="button" $w={16} aria-label="Delete layout"><Icon s={9}><path fill="#76777b" d="M3 5h8v8H3zM2 3h10v1.300H2zM5 1.500h4V3H5z" /></Icon></FlatButton>
            </ButtonRow>
            <Handle />
            <ButtonRow>
              <SectionTitle>Tracks</SectionTitle>
              <FlatButton type="button" $w={16} $tone="#17181a" aria-label="Show all"><Icon s={11}><L d="M2 6.500L7 2l5 4.500V12H2z" w={1.3} /><L d="M5 8h4M5 10.500V8M9 10.500V8" w={1.2} /></Icon></FlatButton>
              <FlatButton type="button" $w={16} aria-label="Find track"><Icon s={10}><circle cx="8" cy="5.500" r="3.500" fill="none" stroke="currentColor" strokeWidth="1.700" /><L d="M5.500 8L2 12" w={1.8} /></Icon></FlatButton>
            </ButtonRow>
            <Tree>
              {tracks.map((t) => (
                <TreeRow key={t.name} $selected={t.selected}>
                  <Check>{t.check ? "✓" : ""}</Check>
                  <Swatch $c={t.c} />
                  <Guide $line={t.level > 0} />
                  <Toggle $level={t.level} $leaf={t.leaf}>
                    {t.leaf ? null : <Tri dir={t.open ? "down" : "right"} s={9} />}
                  </Toggle>
                  <TrackName $selected={t.selected}>{t.name}</TrackName>
                </TreeRow>
              ))}
            </Tree>
          </VisBody>
        </Visibility>

        <Symbols>
          <Tabs>
            <SymbolTab type="button" $on>Symbols</SymbolTab>
            <SymbolTab type="button">Note Functions</SymbolTab>
          </Tabs>
          <SymbolBody>
            <Rail>
              {railIcons.map((r, i) => (
                <RailButton key={r.label} type="button" $on={i === 0} aria-label={r.label}><Icon s={13}>{r.icon}</Icon></RailButton>
              ))}
            </Rail>
            <Palette>
              <PaletteTitle>Clefs</PaletteTitle>
              {palettes.map((p) => (
                <section key={p.name}>
                  <PaletteHead type="button"><Tri s={5} />{p.name}</PaletteHead>
                  <Cells>
                    {p.cells.map((c, i) => <Cell key={i} type="button" aria-label={`${p.name} ${i + 1}`}><ClefDrawing {...c} /></Cell>)}
                  </Cells>
                </section>
              ))}
            </Palette>
          </SymbolBody>
        </Symbols>

        <ScorePane>
          <ScoreRow>
            <Page><Score /></Page>
            <VScroll>
              <Icon s={9}><L d="M4 9l3-3.500L10 9" w={1.4} /></Icon>
              <VThumb />
            </VScroll>
          </ScoreRow>
          <HScroll>
            <button type="button" aria-label="Scroll left"><Icon s={7}><L d="M9 3L5 7l4 4" w={1.3} /></Icon></button>
            <Spacer $grow={1} />
            <button type="button" aria-label="Zoom presets"><Tri s={4} /></button>
            <button type="button" aria-label="Zoom out"><Icon s={8}><L d="M3 7h8" w={2.4} /></Icon></button>
            <Zoom type="range" aria-label="Zoom" min={0} max={100} defaultValue={32} />
            <button type="button" aria-label="Zoom in"><Icon s={8}><L d="M7 2.500v9M2.500 7h9" w={2.4} /></Icon></button>
          </HScroll>
        </ScorePane>
      </Body>
    </Window>
  );
}
